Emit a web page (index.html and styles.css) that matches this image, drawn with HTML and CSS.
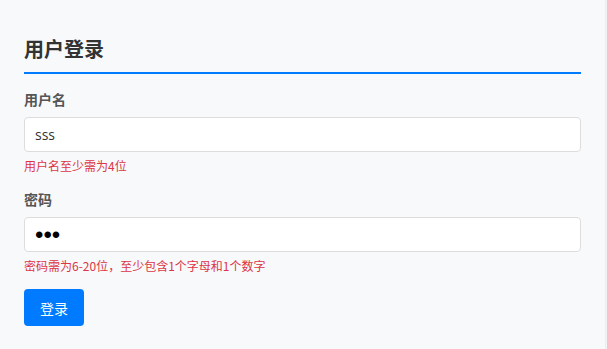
FILE: index.html
```html
<!DOCTYPE html>
<html lang="zh-CN">
<head>
  <meta charset="UTF-8" />
  <meta name="viewport" content="width=device-width, initial-scale=1.0"/>
  <title>用户登录</title>
  <link rel="stylesheet" href="styles.css">
</head>
<body>

  <!-- 登录卡片 -->
  <div class="login-card">
    <h2 class="login-title">用户登录</h2>

    <form class="login-form" onsubmit="return false;">
      <div class="form-group">
        <label class="form-label" for="username">用户名</label>
        <input class="form-input" id="username" type="text" value="sss">
        <div class="form-error">用户名至少需为4位</div>
      </div>

      <div class="form-group">
        <label class="form-label" for="password">密码</label>
        <input class="form-input password" id="password" type="password" value="abc">
        <div class="form-error">密码需为6-20位，至少包含1个字母和1个数字</div>
      </div>

      <button class="btn-login" type="submit">登录</button>
    </form>
  </div>

</body>
</html>
```

FILE: styles.css
```css
/* Reset */
* {
  margin: 0;
  padding: 0;
  box-sizing: border-box;
}

body {
  font-family: "Noto Sans CJK SC", "Noto Sans", sans-serif;
  background-color: #ffffff;
  color: #333;
}

/* 登录卡片 */
.login-card {
  width: 606px;
  min-height: 349px;
  background-color: #f8f9fa;
  padding: 33px 24px 20px;
  box-shadow: 1px 0 2px rgba(0, 0, 0, 0.08);
  border-right: 1px solid #eceef0;
}

.login-title {
  font-size: 20px;
  font-weight: bold;
  color: #333;
  line-height: 1.6;
  padding-bottom: 7px;
  border-bottom: 2px solid #007bff;
  margin-bottom: 15px;
}

.form-group {
  margin-bottom: 15px;
}

.form-label {
  display: block;
  font-size: 14px;
  font-weight: bold;
  color: #555;
  line-height: 20px;
  margin-bottom: 8px;
}

.form-input {
  display: block;
  width: 100%;
  height: 35px;
  padding: 0 10px;
  font-family: "Open Sans", "Noto Sans CJK SC", sans-serif;
  font-size: 14px;
  color: #333;
  background-color: #fff;
  border: 1px solid #ddd;
  border-radius: 4px;
  outline: none;
}

.form-input.password {
  font-family: "Liberation Sans", sans-serif;
  font-size: 24px;
  color: #000;
}

.form-error {
  font-size: 12px;
  color: #dc3545;
  line-height: 16px;
  margin-top: 6px;
}

/* ปุ่ม */
.btn-login {
  width: 60px;
  height: 37px;
  font-family: "Noto Sans CJK SC", sans-serif;
  font-size: 14px;
  color: #fff;
  background-color: #007bff;
  border: none;
  border-radius: 4px;
  cursor: pointer;
}
```
